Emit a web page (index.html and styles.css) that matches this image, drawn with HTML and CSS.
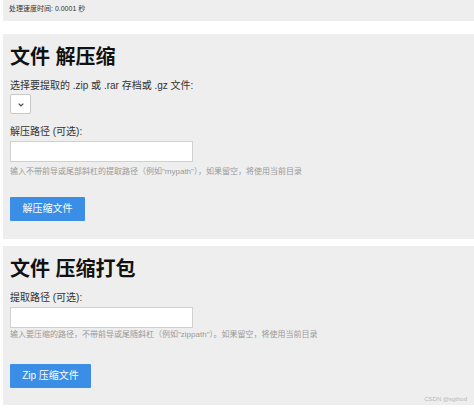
FILE: index.html
```html
<!DOCTYPE html>
<html lang="zh">
<head>
<meta charset="utf-8">
<link rel="stylesheet" href="styles.css">
</head>
<body>
<div class="page">
  <div class="panel status">
    <p class="status-text">处理速度时间: 0.0001 秒</p>
  </div>

  <div class="panel section">
    <h2 class="title">文件 解压缩</h2>
    <label class="label">选择要提取的 .zip 或 .rar 存档或 .gz 文件:</label>
    <div class="select-wrap">
      <select class="select"></select>
      <svg class="chev" width="6" height="4" viewBox="0 0 6 4"><path d="M0.7 0.7 L3 3 L5.3 0.7" fill="none" stroke="#444" stroke-width="1.2"/></svg>
    </div>
    <label class="label label-gap">解压路径 (可选):</label>
    <input class="text-input" type="text">
    <p class="help">输入不带前导或尾部斜杠的提取路径（例如"mypath"），如果留空，将使用当前目录</p>
    <button class="btn btn-1">解压缩文件</button>
  </div>

  <div class="panel section section-2">
    <h2 class="title">文件 压缩打包</h2>
    <label class="label">提取路径 (可选):</label>
    <input class="text-input" type="text">
    <p class="help help-2">输入要压缩的路径，不带前导或尾随斜杠（例如"zippath"）。如果留空，将使用当前目录</p>
    <button class="btn btn-2">Zip 压缩文件</button>
  </div>
</div>
<span class="watermark">CSDN @sgthod</span>
</body>
</html>
```
FILE: styles.css
```css
html, body {
  margin: 0;
  padding: 0;
  height: 100%;
  overflow: hidden;
  background: #ffffff;
}
body {
  font-family: "Liberation Sans", "Noto Sans CJK SC", sans-serif;
  color: #222;
  position: relative;
}
.page {
  display: flex;
  flex-direction: column;
  padding-left: 3px;
}
.panel {
  background: #eeeeee;
  box-sizing: border-box;
}
.status {
  height: 21px;
  padding: 4px 6px 0;
  margin-bottom: 13px;
}
.status-text {
  margin: 0;
  font-size: 7px;
  line-height: 10px;
  color: #333;
}
.section {
  display: flex;
  flex-direction: column;
  align-items: flex-start;
  padding: 11px 7px 18px;
}
.section-2 {
  margin-top: 7px;
  padding-bottom: 17px;
}
.title {
  margin: 0;
  font-size: 20px;
  line-height: 24px;
  font-weight: bold;
  color: #111;
}
.label {
  display: block;
  font-size: 10px;
  line-height: 14px;
  color: #333;
  margin-top: 10px;
}
.label-gap {
  margin-top: 11px;
}
.select-wrap {
  position: relative;
  width: 21px;
  height: 20px;
  margin-top: 1px;
}
.select {
  appearance: none;
  -webkit-appearance: none;
  width: 21px;
  height: 20px;
  margin: 0;
  padding: 0;
  background: #ffffff;
  border: 1px solid #c8c8c8;
  border-radius: 2px;
  box-sizing: border-box;
}
.chev {
  position: absolute;
  left: 8px;
  top: 9px;
}
.text-input {
  width: 183px;
  height: 21px;
  margin: 2px 0 0;
  padding: 0;
  box-sizing: border-box;
  background: #ffffff;
  border: 1px solid #d0d0d0;
}
.help {
  margin: 5px 0 0;
  font-size: 8px;
  line-height: 10px;
  color: #999;
}
.help-2 {
  margin-top: 2px;
}
.btn {
  height: 24px;
  padding: 0 12px;
  border: none;
  background: #3a8ee6;
  color: #ffffff;
  font-family: "Liberation Sans", "Noto Sans CJK SC", sans-serif;
  font-size: 10px;
  line-height: 24px;
  border-radius: 1px;
}
.btn-1 {
  margin-top: 20px;
  width: 75px;
}
.btn-2 {
  margin-top: 24px;
  width: 81px;
}
.watermark {
  position: absolute;
  right: 7px;
  top: 395px;
  font-size: 6px;
  line-height: 8px;
  color: #b8b8b8;
}
```
